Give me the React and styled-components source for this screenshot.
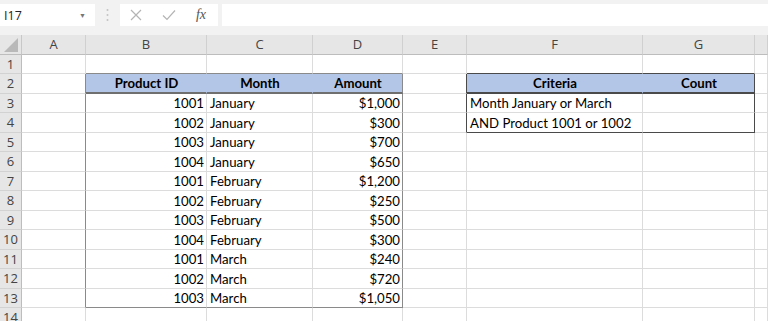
import React from 'react';
import styled, { createGlobalStyle } from 'styled-components';

const Global = createGlobalStyle`
  html, body { margin: 0; padding: 0; background: #fff; }
  body { font-family: Lato, "Open Sans", sans-serif; }
`;

const Page = styled.div`
  width: 768px;
  height: 321px;
  overflow: hidden;
  background: #fff;
  display: flex;
  flex-direction: column;
`;

const Toolbar = styled.div`
  flex: 0 0 35px;
  height: 35px;
  box-sizing: border-box;
  background: #f2f2f2;
  display: flex;
  align-items: flex-start;
  padding-top: 4px;
`;

const NameBox = styled.div`
  width: 95px;
  height: 22px;
  box-sizing: border-box;
  background: #fff;
  display: flex;
  align-items: center;
  justify-content: space-between;
  padding: 0 9px 0 4px;
  font-family: "Open Sans", sans-serif;
  font-size: 12.5px;
  color: #222;
`;

const Caret = styled.span`
  font-size: 7px;
  color: #777;
`;

const Grip = styled.div`
  width: 25px;
  height: 22px;
  display: flex;
  align-items: center;
  justify-content: center;
`;

const ButtonBox = styled.div`
  width: 98px;
  height: 22px;
  background: #fff;
  display: flex;
  align-items: center;
  justify-content: space-between;
  padding: 0 12px 0 10px;
  box-sizing: border-box;
`;

const Fx = styled.span`
  font-family: "Liberation Serif", serif;
  font-style: italic;
  font-size: 14px;
  color: #555;
`;

const FormulaInput = styled.div`
  flex: 1;
  height: 22px;
  margin-left: 4px;
  background: #fff;
`;

const Sheet = styled.div`
  flex: 0 0 auto;
  display: grid;
  grid-template-columns: 22px 64px 121px 106px 90px 64px 176px 112px 1fr;
  grid-auto-rows: 19.5px;
`;

const ColHead = styled.div`
  box-sizing: border-box;
  background: #e6e6e6;
  border-right: 1px solid ${p => (p.$corner ? '#c8c8c8' : '#d0d0d0')};
  border-bottom: 1px solid #bdbdbd;
  display: flex;
  align-items: center;
  justify-content: center;
  font-family: "Open Sans", sans-serif;
  font-size: 13px;
  color: #444;
  position: relative;
`;

const RowHead = styled.div`
  box-sizing: border-box;
  background: #e6e6e6;
  border-right: 1px solid #bdbdbd;
  border-bottom: 1px solid #d2d2d2;
  display: flex;
  align-items: center;
  justify-content: center;
  font-family: "Open Sans", sans-serif;
  font-size: 13px;
  color: #444;
`;

const Cell = styled.div`
  box-sizing: border-box;
  border-right: 1px solid ${p => p.$r};
  border-bottom: ${p => p.$bw}px solid ${p => p.$b};
  background: ${p => p.$fill || '#fff'};
  display: flex;
  align-items: flex-end;
  justify-content: ${p => p.$justify};
  padding: 0 2px 1px 3px;
  font-family: Lato, "Open Sans", sans-serif;
  font-size: 13.2px;
  line-height: 16px;
  font-weight: ${p => (p.$bold ? 700 : 400)};
  color: #000;
  white-space: nowrap;
`;

const GRID = '#dcdcdc';
const BLUE = '#b4c6e7';

const tables = [
  { r1: 2, r2: 13, c1: 2, c2: 4, line: '#8a8a8a', head: '#6f6f6f' },
  { r1: 2, r2: 4, c1: 6, c2: 7, line: '#4a4a4a', head: '#4a4a4a' },
];

const inTable = (r, c) => tables.find(t => r >= t.r1 && r <= t.r2 && c >= t.c1 && c <= t.c2);

const data = {
  2: { 2: ['Product ID', 'center', true], 3: ['Month', 'center', true], 4: ['Amount', 'center', true], 6: ['Criteria', 'center', true], 7: ['Count', 'center', true] },
  4: { 6: ['AND Product 1001 or 1002', 'left'] },
  3: { 6: ['Month January or March', 'left'] },
};

const rows = [
  [1001, 'January', '$1,000'],
  [1002, 'January', '$300'],
  [1003, 'January', '$700'],
  [1004, 'January', '$650'],
  [1001, 'February', '$1,200'],
  [1002, 'February', '$250'],
  [1003, 'February', '$500'],
  [1004, 'February', '$300'],
  [1001, 'March', '$240'],
  [1002, 'March', '$720'],
  [1003, 'March', '$1,050'],
];
rows.forEach((row, i) => {
  const r = i + 3;
  data[r] = data[r] || {};
  data[r][2] = [String(row[0]), 'right'];
  data[r][3] = [row[1], 'left'];
  data[r][4] = [row[2], 'right'];
});

const letters = ['A', 'B', 'C', 'D', 'E', 'F', 'G', ''];

function cellProps(r, c) {
  const t = inTable(r, c);
  const tr = inTable(r, c + 1);
  const tb = inTable(r + 1, c);
  let right = GRID;
  if (t !== tr) right = (t || tr).line;
  else if (t && r === t.r1) right = BLUE;
  let bottom = GRID;
  let bw = 1;
  if (t && r === t.r1) {
    bottom = t.head;
    bw = 2;
  } else if (t !== tb) bottom = (t || tb).line;
  const fill = t && r === t.r1 ? BLUE : undefined;
  return { right, bottom, bw, fill };
}

function Triangle() {
  return (
    <svg width="14" height="14" viewBox="0 0 14 14" style={{ position: 'absolute', right: 3, bottom: 2 }}>
      <polygon points="14,0 14,14 0,14" fill="#b9b9b9" />
    </svg>
  );
}

export default function App() {
  const cells = [];
  cells.push(
    <ColHead key="corner" $corner>
      <Triangle />
    </ColHead>
  );
  letters.forEach((l, i) => cells.push(<ColHead key={'h' + i}>{l}</ColHead>));
  for (let r = 1; r <= 14; r++) {
    cells.push(<RowHead key={'r' + r}>{r}</RowHead>);
    for (let c = 1; c <= 8; c++) {
      const p = cellProps(r, c);
      const d = data[r] && data[r][c];
      const justify = d ? (d[1] === 'right' ? 'flex-end' : d[1] === 'center' ? 'center' : 'flex-start') : 'flex-start';
      cells.push(
        <Cell key={r + '-' + c} $r={p.right} $b={p.bottom} $bw={p.bw} $fill={p.fill} $justify={justify} $bold={d && d[2]}>
          {d ? d[0] : ''}
        </Cell>
      );
    }
  }
  return (
    <>
      <Global />
      <Page>
        <Toolbar>
          <NameBox>
            I17
            <Caret>▼</Caret>
          </NameBox>
          <Grip>
            <svg width="3" height="14" viewBox="0 0 3 14">
              <circle cx="1.5" cy="2" r="1" fill="#c4c4c4" />
              <circle cx="1.5" cy="7" r="1" fill="#c4c4c4" />
              <circle cx="1.5" cy="12" r="1" fill="#c4c4c4" />
            </svg>
          </Grip>
          <ButtonBox>
            <svg width="12" height="12" viewBox="0 0 12 12">
              <path d="M1 1 L11 11 M11 1 L1 11" stroke="#b4b4b4" strokeWidth="1.2" fill="none" />
            </svg>
            <svg width="14" height="12" viewBox="0 0 14 12">
              <path d="M1 6.5 L5 10.5 L13 1.5" stroke="#b4b4b4" strokeWidth="1.2" fill="none" />
            </svg>
            <Fx>fx</Fx>
          </ButtonBox>
          <FormulaInput />
        </Toolbar>
        <Sheet>{cells}</Sheet>
      </Page>
    </>
  );
}
